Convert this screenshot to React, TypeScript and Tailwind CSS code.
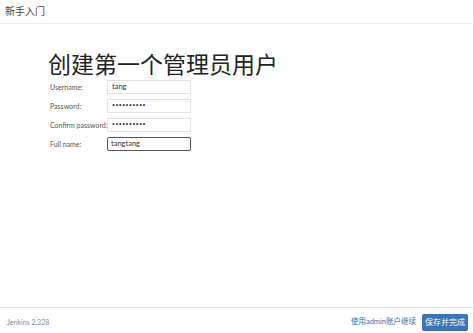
import React from "react";

const fields = [
  { label: "Username:", value: "tang" },
  { label: "Password:", value: "••••••••••", secret: true },
  { label: "Confirm password:", value: "••••••••••", secret: true },
  { label: "Full name:", value: "tangtang", focused: true },
];

export default function App() {
  return (
    <div
      className="flex h-[333px] w-[474px] bg-white text-[#333]"
      style={{ fontFamily: 'Lato, "Noto Sans CJK SC", sans-serif' }}
    >
      <div className="flex flex-1 flex-col border-r border-[#d8d8d8]">
        <div className="flex h-[24px] items-center border-b border-[#eeeeee] px-[5px] text-[10px] text-[#444]">
          新手入门
        </div>

        <div className="flex-1 pl-[48px] pt-[25px]">
          <h1 className="text-[23px] leading-[30px] text-[#222]">创建第一个管理员用户</h1>
          <div className="mt-[1px] flex flex-col gap-[5px]">
            {fields.map((f) => (
              <div key={f.label} className="flex items-center">
                <div className="w-[59px] shrink-0 whitespace-nowrap pl-[2px] text-[7px] text-[#555]">{f.label}</div>
                <div
                  className={
                    f.focused
                      ? "flex h-[14px] w-[84px] items-center rounded-[2px] border border-[#555] px-[3px] text-[7.5px] text-[#333]"
                      : "flex h-[14px] w-[84px] items-center border border-[#e2e2e2] px-[4px] text-[7.5px] text-[#333]"
                  }
                >
                  {f.secret ? (
                    <span className="text-[5px] tracking-[0.5px] text-[#333]">{f.value}</span>
                  ) : (
                    f.value
                  )}
                </div>
              </div>
            ))}
          </div>
        </div>

        <div className="flex h-[26px] items-center justify-between border-t border-[#e4e4e4] pl-[7px] pr-[5px]">
          <span className="pt-[4px] text-[7px] text-[#888]">Jenkins 2.328</span>
          <div className="flex items-center gap-[6px] pt-[3px]">
            <span className="text-[7.5px] text-[#3a6ea5]">使用admin账户继续</span>
            <button className="h-[17px] rounded-[2px] bg-[#3a75b5] px-[3px] text-[8px] text-white">
              保存并完成
            </button>
          </div>
        </div>
      </div>
    </div>
  );
}
